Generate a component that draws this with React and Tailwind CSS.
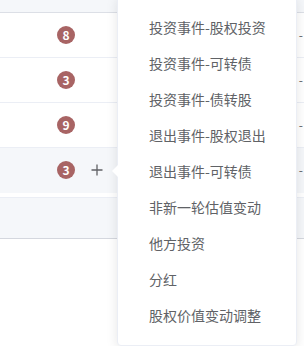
import React from 'react';

const rows = [
    { count: 8 },
    { count: 3 },
    { count: 9 },
    { count: 3, hover: true },
];

const menuItems = [
    '投资事件-股权投资',
    '投资事件-可转债',
    '投资事件-债转股',
    '退出事件-股权退出',
    '退出事件-可转债',
    '非新一轮估值变动',
    '他方投资',
    '分红',
    '股权价值变动调整',
];

const Badge = ({ n }) => (
    <span className="w-[18px] h-[18px] rounded-full bg-[#a86464] text-white text-[12px] font-bold flex items-center justify-center leading-none">
        {n}
    </span>
);

const App = () => {
    return (
        <div
            className="relative w-[304px] h-[346px] overflow-hidden bg-white"
            style={{ fontFamily: '"Noto Sans CJK SC", "Noto Sans", sans-serif' }}
        >
            {/* table */}
            <div className="w-full">
                <div className="h-[13px] bg-[#f5f7fa] border-b border-[#dcdfe6]" />
                {rows.map((r, i) => (
                    <div
                        key={i}
                        className={`h-[45px] flex items-center border-b ${r.hover ? 'bg-[#f5f7fa] border-[#f5f7fa]' : 'bg-white border-[#ebeef5]'}`}
                    >
                        <div className="w-[57px]" />
                        <Badge n={r.count} />
                        <div className="w-[16px]" />
                        {r.hover && (
                            <svg width="12" height="12" viewBox="0 0 12 12" className="text-[#606266]">
                                <path d="M6 0.5V11.5M0.5 6H11.5" stroke="currentColor" strokeWidth="1.3" />
                            </svg>
                        )}
                        <div className="flex-1" />
                        <span className="text-[12px] text-[#606266] mr-[1px]">-</span>
                    </div>
                ))}
                <div className="h-[4px]" />
                <div className="h-[42px] bg-[#f5f7fa] border-t border-b border-t-[#ebeef5] border-b-[#d4d7de]" />
            </div>

            {/* popover */}
            <div className="absolute left-[117px] top-[-4px] w-[180px] bg-white border border-[#ebeef5] rounded-[4px] shadow-[0_2px_12px_rgba(0,0,0,0.1)] py-[12px]">
                <div className="absolute left-[-6px] top-[168px] w-0 h-0 border-y-[6px] border-y-transparent border-r-[6px] border-r-white" />
                {menuItems.map((m) => (
                    <div key={m} className="h-[36px] flex items-center pl-[31px] text-[14px] text-[#606266] whitespace-nowrap">
                        {m}
                    </div>
                ))}
            </div>
        </div>
    );
};

export default App;
